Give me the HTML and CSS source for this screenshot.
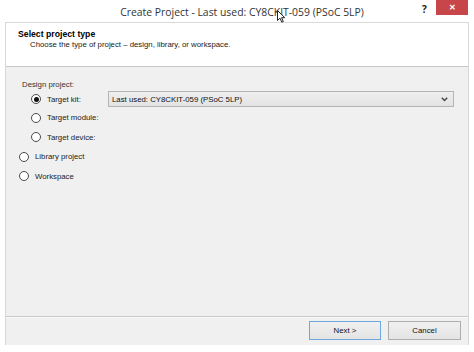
FILE: index.html
```html
<!DOCTYPE html>
<html lang="en">
<head>
    <meta charset="UTF-8">
    <title>Create Project</title>
    <link rel="stylesheet" href="styles.css">
</head>
<body>
    <div class="titlebar">
        <div class="title">Create Project - Last used: CY8CKIT-059 (PSoC 5LP)</div>
        <div class="help">?</div>
        <div class="close">&#x2715;</div>
        <svg class="cursor" width="9" height="13" viewBox="0 0 9 13">
            <path d="M0.5 0.5 L0.5 10.5 L3 8.2 L4.8 12.2 L6.3 11.5 L4.6 7.7 L7.8 7.7 Z" fill="#fff" stroke="#222" stroke-width="1" stroke-linejoin="round"/>
        </svg>
    </div>

    <div class="dialog">
        <div class="header">
            <div class="header-title">Select project type</div>
            <div class="header-desc">Choose the type of project &ndash; design, library, or workspace.</div>
        </div>

        <div class="content">
            <div class="group-label">Design project:</div>

            <div class="row sub first">
                <span class="radio checked"></span>
                <span class="label fixed">Target kit:</span>
                <div class="combo">
                    <span>Last used: CY8CKIT-059 (PSoC 5LP)</span>
                    <svg class="chevron" width="7" height="5" viewBox="0 0 7 5">
                        <path d="M0.8 0.8 L3.5 3.6 L6.2 0.8" fill="none" stroke="#444" stroke-width="1.4"/>
                    </svg>
                </div>
            </div>
            <div class="row sub">
                <span class="radio"></span>
                <span class="label">Target module:</span>
            </div>
            <div class="row sub">
                <span class="radio"></span>
                <span class="label">Target device:</span>
            </div>
            <div class="row">
                <span class="radio"></span>
                <span class="label">Library project</span>
            </div>
            <div class="row">
                <span class="radio"></span>
                <span class="label">Workspace</span>
            </div>
        </div>

        <div class="footer">
            <button class="btn default">Next &gt;</button>
            <button class="btn">Cancel</button>
        </div>
    </div>
</body>
</html>
```

FILE: styles.css
```css
* {
    box-sizing: border-box;
}

body {
    margin: 0;
    width: 474px;
    height: 352px;
    background-color: #ffffff;
    font-family: "Liberation Sans", Arial, sans-serif;
    font-size: 7.8px;
    color: #1a1a1a;
    overflow: hidden;
}

/* window title bar */
.titlebar {
    position: relative;
    display: flex;
    height: 22px;
    padding-right: 6px;
}

.title {
    flex: 1;
    padding-top: 4px;
    padding-left: 62px;
    text-align: center;
    font-family: "Open Sans", "Liberation Sans", sans-serif;
    font-size: 10.4px;
    line-height: 16px;
    color: #333;
}

.help {
    width: 14px;
    padding-top: 2px;
    font-family: "Open Sans", sans-serif;
    font-weight: 700;
    font-size: 10px;
    color: #222;
}

.close {
    width: 32px;
    height: 15px;
    background-color: #c7464a;
    color: #fff;
    font-size: 8px;
    font-weight: 700;
    line-height: 15px;
    text-align: center;
}

.cursor {
    position: absolute;
    left: 277px;
    top: 10px;
}

/* dialog body */
.dialog {
    margin-left: 5px;
    width: 464px;
    height: 323px;
    display: flex;
    flex-direction: column;
    border-left: 1px solid #d8d8d8;
    border-right: 1px solid #d8d8d8;
    background-color: #f0f0f0;
}

.header {
    height: 45px;
    padding: 6px 0 0 12px;
    background-color: #ffffff;
    border-top: 1px solid #dadada;
    border-bottom: 1px solid #c8c8c8;
}

.header-title {
    font-weight: 700;
    font-size: 8.7px;
    line-height: 11px;
    color: #000;
}

.header-desc {
    padding-left: 12px;
    line-height: 10px;
    color: #222;
}

.content {
    flex: 1;
    padding: 13px 14px 0 13px;
}

.group-label {
    line-height: 10px;
    padding-left: 3px;
    color: #333;
}

.row {
    display: flex;
    align-items: center;
    height: 19.5px;
}

.row.first {
    height: 18px;
}

.row.sub {
    padding-left: 12px;
}

.radio {
    flex: none;
    width: 10px;
    height: 10px;
    border: 1px solid #4a4a4a;
    border-radius: 50%;
    background-color: #fff;
    margin-right: 6px;
    display: flex;
    align-items: center;
    justify-content: center;
}

.radio.checked::after {
    content: "";
    width: 5px;
    height: 5px;
    border-radius: 50%;
    background-color: #111;
}

.label {
    color: #222;
}

.label.fixed {
    width: 61px;
    flex: none;
}

.combo {
    flex: 1;
    height: 16px;
    display: flex;
    align-items: center;
    justify-content: space-between;
    padding: 0 5px 0 3px;
    border: 1px solid #b4b4b4;
    background: linear-gradient(#efefef, #e3e3e3);
    color: #111;
}

/* bottom buttons */
.footer {
    height: 29px;
    display: flex;
    justify-content: flex-end;
    gap: 7px;
    padding: 4px 7px 0 0;
    border-top: 1px solid #c9c9c9;
    box-shadow: inset 0 1px 0 #fbfbfb;
}

.btn {
    width: 73px;
    height: 19px;
    padding: 0;
    border: 1px solid #adadad;
    background: linear-gradient(#f0f0f0, #e4e4e4);
    font-family: "Liberation Sans", Arial, sans-serif;
    font-size: 7.8px;
    color: #111;
}

.btn.default {
    width: 72px;
    border-color: #6ea6e0;
}
```
